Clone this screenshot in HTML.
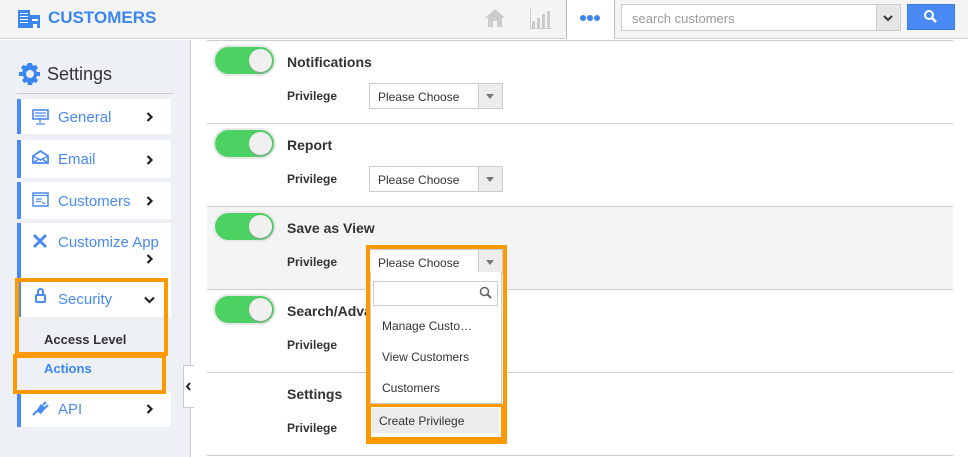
<!DOCTYPE html>
<html><head><style>
*{margin:0;padding:0;box-sizing:border-box}
body{width:968px;height:457px;overflow:hidden;background:#fff;font-family:"Liberation Sans",sans-serif;position:relative}
.a{position:absolute}
.hdr{left:0;top:0;width:968px;height:39px;background:#f4f4f4;border-bottom:1px solid #ccc}
.side{left:0;top:40px;width:191px;height:417px;background:#edf0f4;border-right:1px solid #ccc}
.item{left:17px;width:154px;background:#fff;border-left:4px solid #4a8af4;color:#4a8af4;font-size:15px}
.item span{position:absolute;left:37px}
.chev{position:absolute;left:125px}
.row{left:207px;width:746px;height:83px;border-bottom:1px solid #ccc}
.tog{left:8px;top:6px;width:59px;height:27px;border-radius:14px;background:#4cd263;box-shadow:0 0 0 2px #e8e8e8}
.tog:after{content:"";position:absolute;right:2px;top:2px;width:23px;height:23px;border-radius:50%;background:#f0f0f0;box-shadow:0 1px 2px #999}
.ttl{left:80px;top:13px;font-size:14px;font-weight:bold;color:#333}
.pv{left:80px;top:48px;font-size:12px;font-weight:bold;color:#333}
.sel{left:162px;top:42px;width:134px;height:26px;border:1px solid #ccc;background:#fff;font-size:12px;color:#333;padding:6px 8px}
.sel:after{content:"";position:absolute;right:0;top:0;width:23px;height:24px;border-left:1px solid #ccc;background:#ececec}
.sel i{position:absolute;right:8px;top:10px;width:0;height:0;border:4px solid transparent;border-top:5px solid #777;z-index:1}
.ob{border:4px solid #f90}
</style></head><body>
<div class="a hdr"></div>
<svg class="a" style="left:18px;top:8px" width="24" height="20" viewBox="0 0 24 20"><rect x="0" y="2" width="12" height="18" fill="#3b86f0"/><rect x="12" y="7" width="10" height="13" fill="#3b86f0"/><g fill="#fff"><rect x="2" y="5" width="8" height="1"/><rect x="2" y="8" width="8" height="1"/><rect x="2" y="11" width="8" height="1"/><rect x="2" y="14" width="8" height="1"/><rect x="14" y="11" width="6" height="2"/><rect x="15" y="16" width="4" height="4"/></g></svg>
<div class="a" style="left:48px;top:8px;font-size:17px;font-weight:bold;color:#3b86f0">CUSTOMERS</div>
<svg class="a" style="left:484px;top:8px" width="22" height="20" viewBox="0 0 22 20"><path d="M11 1 L1 10 H4 V19 H9 V13 H13 V19 H18 V10 H21 Z" fill="#ccc"/></svg>
<svg class="a" style="left:530px;top:9px" width="22" height="20"><g fill="#ccc"><rect x="2" y="12" width="3" height="7"/><rect x="7" y="9" width="3" height="10"/><rect x="12" y="5" width="3" height="14"/><rect x="17" y="2" width="3" height="17"/><rect x="0" y="0" width="1" height="20"/><rect x="0" y="19" width="22" height="1"/></g></svg>
<div class="a" style="left:566px;top:0;width:49px;height:39px;background:#fff;border-left:1px solid #bbb;border-right:1px solid #bbb;border-bottom:1px solid #fff"></div>
<div class="a" style="left:580px;top:15px;width:6px;height:6px;border-radius:50%;background:#3b86f0;box-shadow:7px 0 #3b86f0,14px 0 #3b86f0"></div>
<div class="a" style="left:621px;top:4px;width:280px;height:27px;border:1px solid #ccc;background:#fff;font-size:13px;color:#999;padding:6px 10px">search customers</div>
<div class="a" style="left:876px;top:5px;width:24px;height:25px;background:#e6e6e6;border-left:1px solid #ccc"></div>
<svg class="a" style="left:883px;top:15px" width="10" height="8"><path d="M1 1 L5 5 L9 1" stroke="#333" stroke-width="2" fill="none"/></svg>
<div class="a" style="left:907px;top:4px;width:48px;height:26px;background:#4a8af4;border:1px solid #3b7be0"></div>
<svg class="a" style="left:923px;top:9px" width="16" height="16"><circle cx="6" cy="6" r="4" stroke="#fff" stroke-width="2" fill="none"/><path d="M9 9 L13 13" stroke="#fff" stroke-width="2.5"/></svg>

<div class="a side"></div>
<svg class="a" style="left:18px;top:62px" width="24" height="24" viewBox="0 0 24 24"><path fill="#3b86f0" d="M10 1h4l1 3 3-1 2 3-2 2 1 2h3v4h-3l-1 2 2 2-2 3-3-1-1 3h-4l-1-3-3 1-2-3 2-2-1-2H1v-4h3l1-2-2-2 2-3 3 1z"/><circle cx="12" cy="12" r="4" fill="#edf0f4"/></svg>
<div class="a" style="left:47px;top:64px;font-size:18px;color:#333">Settings</div>
<div class="a" style="left:17px;top:93px;width:157px;height:1px;background:#ccc"></div>
<div class="a item" style="top:99px;height:35px"><span style="top:10px">General</span><svg class="chev" style="top:13px" width="8" height="10"><path d="M1.5 1 L5.5 5 L1.5 9" stroke="#222" stroke-width="2.2" fill="none"/></svg></div>
<div class="a item" style="top:140px;height:38px"><span style="top:11px">Email</span><svg class="chev" style="top:15px" width="8" height="10"><path d="M1.5 1 L5.5 5 L1.5 9" stroke="#222" stroke-width="2.2" fill="none"/></svg></div>
<div class="a item" style="top:182px;height:37px"><span style="top:11px">Customers</span><svg class="chev" style="top:14px" width="8" height="10"><path d="M1.5 1 L5.5 5 L1.5 9" stroke="#222" stroke-width="2.2" fill="none"/></svg></div>
<div class="a item" style="top:223px;height:58px"><span style="top:11px">Customize App</span><svg class="chev" style="top:31px" width="8" height="10"><path d="M1.5 1 L5.5 5 L1.5 9" stroke="#222" stroke-width="2.2" fill="none"/></svg></div>
<div class="a item" style="top:281px;height:36px"><span style="top:10px">Security</span><svg class="chev" style="top:15px;left:123px" width="11" height="8"><path d="M1 1.5 L5.5 6 L10 1.5" stroke="#222" stroke-width="2.2" fill="none"/></svg></div>
<div class="a item" style="top:392px;height:35px"><span style="top:9px">API</span><svg class="chev" style="top:12px" width="8" height="10"><path d="M1.5 1 L5.5 5 L1.5 9" stroke="#222" stroke-width="2.2" fill="none"/></svg></div>
<svg class="a" style="left:32px;top:109px" width="18" height="16"><rect x="1" y="1" width="15" height="9" fill="none" stroke="#4a8af4" stroke-width="1.6"/><path d="M3 4h11M3 7h11M8 10v4M4 15h9" stroke="#4a8af4" stroke-width="1.3"/></svg>
<svg class="a" style="left:32px;top:150px" width="18" height="14"><path d="M1 6 L8.5 1 L16 6 V13 H1 Z" fill="none" stroke="#4a8af4" stroke-width="1.8"/><path d="M1 6 L8.5 10 L16 6 M1 13 L7 9 M16 13 L10 9" stroke="#4a8af4" stroke-width="1.5" fill="none"/></svg>
<svg class="a" style="left:32px;top:192px" width="17" height="15"><rect x="1" y="1" width="15" height="13" fill="none" stroke="#4a8af4" stroke-width="1.5"/><path d="M1 3.5h15M4 7h6M4 9.5h5M10 10l3 2" stroke="#4a8af4" stroke-width="1.3"/></svg>
<svg class="a" style="left:31px;top:232px" width="18" height="18"><path d="M3 3 L15 15 M15 3 L3 15" stroke="#4a8af4" stroke-width="3"/></svg>
<div class="a" style="left:35px;top:294px;width:11px;height:9px;border:2px solid #4a8af4;border-radius:2px"></div>
<div class="a" style="left:37px;top:288px;width:7px;height:8px;border:2px solid #4a8af4;border-bottom:none;border-radius:4px 4px 0 0"></div>
<svg class="a" style="left:31px;top:400px" width="18" height="16"><path d="M5 11 L10 4 L15 8 L10 14 Z" fill="#4a8af4"/><path d="M2 15 L6 11 M12 5 L15 2 M14 8 L17 5" stroke="#4a8af4" stroke-width="2"/></svg>
<div class="a" style="left:44px;top:332px;font-size:13px;font-weight:bold;color:#333">Access Level</div>
<div class="a" style="left:44px;top:361px;font-size:13px;font-weight:bold;color:#3b86f0">Actions</div>
<div class="a ob" style="left:15px;top:278px;width:153px;height:78px"></div>
<div class="a ob" style="left:13px;top:354px;width:153px;height:40px"></div>
<div class="a" style="left:183px;top:365px;width:11px;height:43px;background:#fff;border:1px solid #ccc;border-right:none"></div>
<svg class="a" style="left:185px;top:382px" width="7" height="9"><path d="M5 1 L2 4.5 L5 8" stroke="#222" stroke-width="2" fill="none"/></svg>

<div class="a" style="left:207px;top:40px;width:746px;height:1px;background:#ccc"></div>
<div class="a row" style="top:41px"><div class="a tog"></div><div class="a ttl">Notifications</div><div class="a pv">Privilege</div><div class="a sel">Please Choose<i></i></div></div>
<div class="a row" style="top:124px"><div class="a tog"></div><div class="a ttl">Report</div><div class="a pv">Privilege</div><div class="a sel">Please Choose<i></i></div></div>
<div class="a row" style="top:207px;background:#f4f4f4"><div class="a tog"></div><div class="a ttl">Save as View</div><div class="a pv">Privilege</div><div class="a sel">Please Choose<i></i></div></div>
<div class="a row" style="top:290px"><div class="a tog"></div><div class="a ttl">Search/Advanced</div><div class="a pv">Privilege</div></div>
<div class="a row" style="top:373px"><div class="a ttl">Settings</div><div class="a pv">Privilege</div></div>

<div class="a" style="left:370px;top:272px;width:132px;height:132px;background:#fff;border:1px solid #ccc;border-top:none"></div>
<div class="a" style="left:373px;top:281px;width:125px;height:25px;border:1px solid #ccc;background:#fff"></div>
<svg class="a" style="left:479px;top:286px" width="14" height="14"><circle cx="5.5" cy="5.5" r="4" stroke="#666" stroke-width="1.6" fill="none"/><path d="M8.5 8.5 L12 12" stroke="#666" stroke-width="2"/></svg>
<div class="a" style="left:382px;top:319px;font-size:12px;color:#333">Manage Custo…</div>
<div class="a" style="left:382px;top:350px;font-size:12px;color:#333">View Customers</div>
<div class="a" style="left:382px;top:381px;font-size:12px;color:#333">Customers</div>
<div class="a" style="left:372px;top:408px;width:127px;height:25px;background:#ececec;font-size:12px;color:#333;padding:6px 7px">Create Privilege</div>
<div class="a ob" style="left:366px;top:245px;width:141px;height:199px"></div>
<div class="a ob" style="left:368px;top:404px;width:136px;height:36px;border-width:3px"></div>
</body></html>
